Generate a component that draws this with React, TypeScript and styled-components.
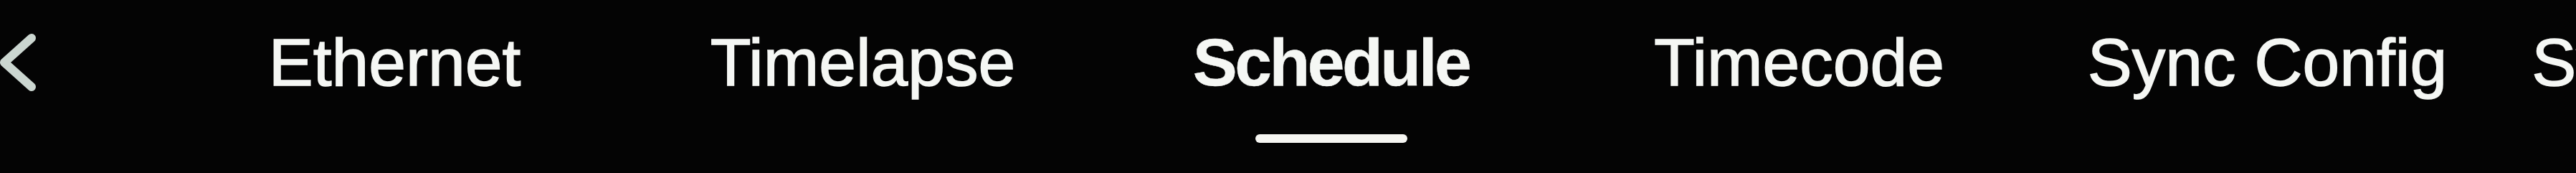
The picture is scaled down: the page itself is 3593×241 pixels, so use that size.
import styled, { createGlobalStyle } from 'styled-components';

const GlobalStyle = createGlobalStyle`
  html, body {
    margin: 0;
    padding: 0;
    background: #040404;
  }
`;

const Bar = styled.nav`
  display: flex;
  width: 3593px;
  height: 241px;
  background: #040404;
  overflow: hidden;
  font-family: 'Liberation Sans', Arial, sans-serif;
`;

const BackButton = styled.button`
  flex: 0 0 224px;
  display: flex;
  align-items: flex-start;
  padding: 42px 0 0 0;
  margin: 0;
  background: none;
  border: none;
  outline: none;
  cursor: pointer;
`;

const Tabs = styled.div`
  display: flex;
  flex: 0 0 auto;
`;

const Tab = styled.div`
  flex: 0 0 653px;
  display: flex;
  flex-direction: column;
  align-items: center;
  padding-top: 41px;
  cursor: pointer;
`;

const Label = styled.span<{ $active?: boolean }>`
  font-size: 93px;
  line-height: 93px;
  white-space: nowrap;
  color: #f5f7f4;
  -webkit-text-stroke: ${(p) => (p.$active ? '0.5px' : '1.5px')} #f5f7f4;
  font-weight: ${(p) => (p.$active ? 700 : 400)};
  letter-spacing: ${(p) => (p.$active ? '-3.5px' : '0')};
`;

const Indicator = styled.div<{ $active?: boolean }>`
  margin-top: 53px;
  width: 212px;
  height: 12px;
  border-radius: 6px;
  background: ${(p) => (p.$active ? '#f6f6f2' : 'transparent')};
`;

const tabs = ['Ethernet', 'Timelapse', 'Schedule', 'Timecode', 'Sync Config', 'Sync Settings'];
const activeTab = 'Schedule';

const ChevronLeft = () => (
  <svg width="56" height="90" viewBox="0 0 56 90" fill="none">
    <polyline
      points="44,11 6,45 44,79"
      stroke="#cbd6d0"
      strokeWidth="12"
      strokeLinecap="round"
      strokeLinejoin="round"
    />
  </svg>
);

export default function App() {
  return (
    <>
      <GlobalStyle />
      <Bar>
        <BackButton aria-label="Back">
          <ChevronLeft />
        </BackButton>
        <Tabs>
          {tabs.map((name) => (
            <Tab key={name}>
              <Label $active={name === activeTab}>{name}</Label>
              <Indicator $active={name === activeTab} />
            </Tab>
          ))}
        </Tabs>
      </Bar>
    </>
  );
}
